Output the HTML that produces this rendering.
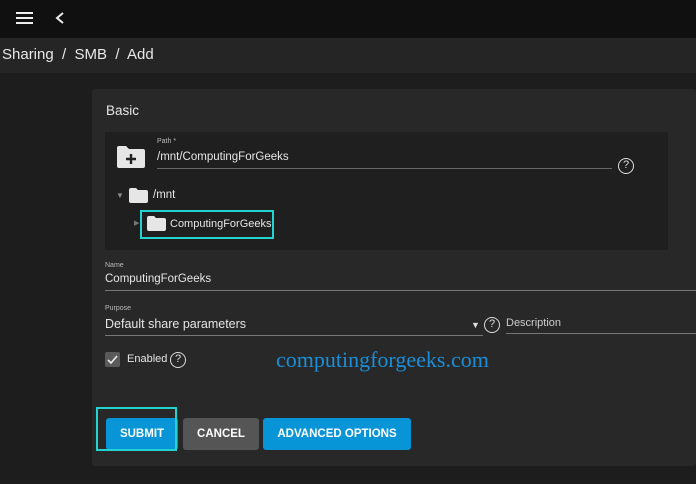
<!DOCTYPE html>
<html><head><style>
*{margin:0;padding:0;box-sizing:border-box}
body{width:696px;height:484px;overflow:hidden;background:#1d1d1d;font-family:"Liberation Sans",sans-serif;color:#e6e6e6;position:relative}
.a{position:absolute}
.q{position:absolute;width:16px;height:16px;border:1.6px solid #ddd;border-radius:50%;font-size:11px;text-align:center;line-height:13px;color:#ddd}
.line{position:absolute;height:1px;background:#777}
.btn{position:absolute;top:418px;height:32px;border-radius:3px;color:#fff;font-weight:bold;font-size:11.5px;text-align:center;line-height:32px}
</style></head><body>
<div class="a" style="left:0;top:0;width:696px;height:38px;background:#101010"></div>
<div class="a" style="left:16px;top:12px;width:17px;height:2px;background:#eee;box-shadow:0 5px 0 #eee,0 10px 0 #eee"></div>
<svg class="a" style="left:54px;top:11px" width="12" height="14"><path d="M9 2L3 7L9 12" stroke="#eee" stroke-width="2" fill="none"/></svg>
<div class="a" style="left:0;top:38px;width:696px;height:35px;background:#252525"></div>
<div class="a" style="left:2px;top:46px;font-size:15px;color:#e8e8e8">Sharing&nbsp; /&nbsp; SMB&nbsp; /&nbsp; Add</div>
<div class="a" style="left:92px;top:89px;width:604px;height:377px;background:#282828;border-radius:3px"></div>
<div class="a" style="left:106px;top:103px;font-size:13.5px">Basic</div>
<div class="a" style="left:105px;top:132px;width:563px;height:118px;background:#1f1f1f"></div>
<svg class="a" style="left:116px;top:145px" width="30" height="24"><path d="M1 3Q1 1 3 1H10L13 4H27Q29 4 29 6V21Q29 23 27 23H3Q1 23 1 21Z" fill="#e6e6e6"/><path d="M15 9V19M10 14H20" stroke="#222" stroke-width="2.4"/></svg>
<div class="a" style="left:157px;top:138px;font-size:7px;color:#bbb">Path *</div>
<div class="a" style="left:157px;top:151px;font-size:11.5px">/mnt/ComputingForGeeks</div>
<div class="line" style="left:157px;top:168px;width:455px;background:#666"></div>
<div class="q" style="left:618px;top:158px">?</div>
<div class="a" style="left:116px;top:191px;font-size:8px;color:#888">▼</div>
<svg class="a" style="left:129px;top:188px" width="19" height="15"><path d="M0 2Q0 0 2 0H7L9 2H17Q19 2 19 4V13Q19 15 17 15H2Q0 15 0 13Z" fill="#e6e6e6"/></svg>
<div class="a" style="left:153px;top:189px;font-size:11.5px">/mnt</div>
<div class="a" style="left:134px;top:219px;font-size:7px;color:#777">▶</div>
<div class="a" style="left:140px;top:210px;width:134px;height:29px;border:2px solid #22d3d0;background:#1f1f1f"></div>
<svg class="a" style="left:147px;top:216px" width="19" height="15"><path d="M0 2Q0 0 2 0H7L9 2H17Q19 2 19 4V13Q19 15 17 15H2Q0 15 0 13Z" fill="#e6e6e6"/></svg>
<div class="a" style="left:170px;top:218px;font-size:11px">ComputingForGeeks</div>
<div class="a" style="left:105px;top:262px;font-size:7px;color:#bbb">Name</div>
<div class="a" style="left:105px;top:273px;font-size:11.5px">ComputingForGeeks</div>
<div class="line" style="left:105px;top:290px;width:591px"></div>
<div class="a" style="left:105px;top:305px;font-size:7px;color:#bbb">Purpose</div>
<div class="a" style="left:105px;top:317px;font-size:12.5px">Default share parameters</div>
<div class="line" style="left:105px;top:335px;width:378px"></div>
<div class="a" style="left:471px;top:320px;font-size:9px;color:#ddd">▼</div>
<div class="q" style="left:484px;top:317px">?</div>
<div class="a" style="left:506px;top:317px;font-size:11px;color:#ccc">Description</div>
<div class="line" style="left:506px;top:333px;width:190px"></div>
<div class="a" style="left:105px;top:352px;width:15px;height:15px;background:#5a5a5a;border-radius:2px"></div>
<svg class="a" style="left:106px;top:353px" width="13" height="13"><path d="M2 7L5 10L11 3" stroke="#eee" stroke-width="1.6" fill="none"/></svg>
<div class="a" style="left:127px;top:353px;font-size:11px">Enabled</div>
<div class="q" style="left:170px;top:352px">?</div>
<div class="a" style="left:276px;top:347px;font-family:'Liberation Serif',serif;font-size:22px;color:#1a8fd8">computingforgeeks.com</div>
<div class="btn" style="left:106px;width:72px;background:#0895d8">SUBMIT</div>
<div class="a" style="left:96px;top:407px;width:81px;height:44px;border:2px solid #22d3d0"></div>
<div class="btn" style="left:183px;width:76px;background:#555">CANCEL</div>
<div class="btn" style="left:263px;width:148px;background:#0895d8">ADVANCED OPTIONS</div>
</body></html>
